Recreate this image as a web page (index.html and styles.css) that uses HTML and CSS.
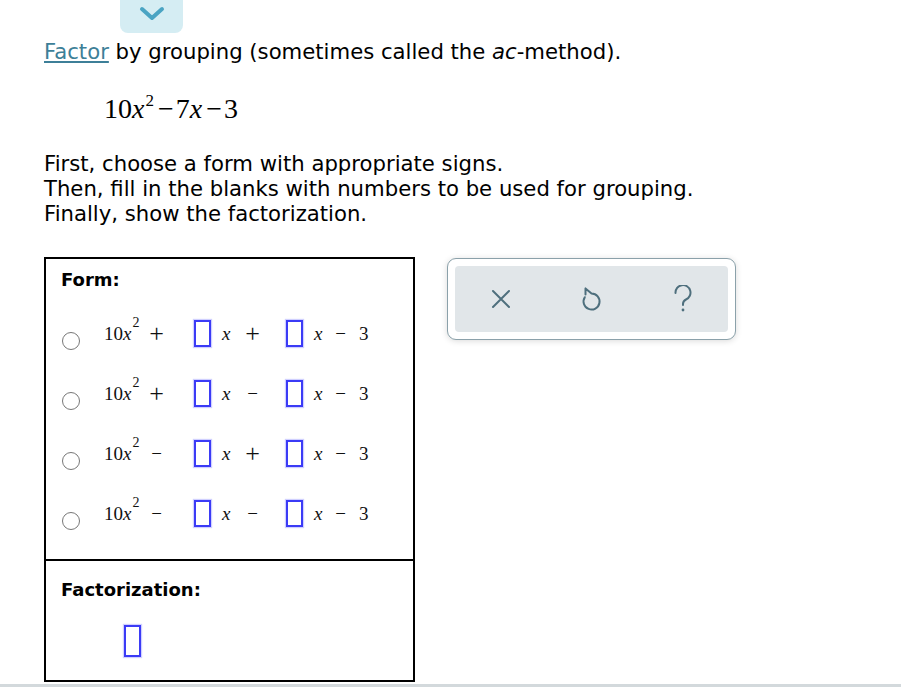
FILE: index.html
```html
<!DOCTYPE html>
<html lang="en">
<head>
    <meta charset="UTF-8">
    <title>Factor by grouping</title>
    <link rel="stylesheet" href="styles.css">
</head>
<body>

    <!-- Pestaña para plegar -->
    <div class="tab">
        <svg width="26" height="16" viewBox="0 0 26 16"><polyline points="3,3 13,12 23,3" fill="none" stroke="#4aa4c3" stroke-width="4" stroke-linecap="round" stroke-linejoin="round"/></svg>
    </div>

    <div class="content">
        <p class="prompt"><a class="term" href="#">Factor</a> by grouping (sometimes called the <i>ac</i>-method).</p>

        <div class="math-main">10<i>x</i><sup>2</sup><span class="op">−</span>7<i>x</i><span class="op">−</span>3</div>

        <p class="steps">
            First, choose a form with appropriate signs.<br>
            Then, fill in the blanks with numbers to be used for grouping.<br>
            Finally, show the factorization.
        </p>

        <div class="work">
            <div class="answer-box">
                <div class="form-part">
                    <div class="label">Form:</div>

                    <div class="option">
                        <span class="radio"></span>
                        <span class="expr">
                            <span class="lead">10<i>x</i><sup>2</sup></span>
                            <span class="sign plus">+</span>
                            <span class="blank first"></span>
                            <i class="var">x</i>
                            <span class="sign mid plus">+</span>
                            <span class="blank second"></span>
                            <i class="var">x</i>
                            <span class="sign last">−</span>
                            <span class="const">3</span>
                        </span>
                    </div>

                    <div class="option">
                        <span class="radio"></span>
                        <span class="expr">
                            <span class="lead">10<i>x</i><sup>2</sup></span>
                            <span class="sign plus">+</span>
                            <span class="blank first"></span>
                            <i class="var">x</i>
                            <span class="sign mid">−</span>
                            <span class="blank second"></span>
                            <i class="var">x</i>
                            <span class="sign last">−</span>
                            <span class="const">3</span>
                        </span>
                    </div>

                    <div class="option">
                        <span class="radio"></span>
                        <span class="expr">
                            <span class="lead">10<i>x</i><sup>2</sup></span>
                            <span class="sign">−</span>
                            <span class="blank first"></span>
                            <i class="var">x</i>
                            <span class="sign mid plus">+</span>
                            <span class="blank second"></span>
                            <i class="var">x</i>
                            <span class="sign last">−</span>
                            <span class="const">3</span>
                        </span>
                    </div>

                    <div class="option">
                        <span class="radio"></span>
                        <span class="expr">
                            <span class="lead">10<i>x</i><sup>2</sup></span>
                            <span class="sign">−</span>
                            <span class="blank first"></span>
                            <i class="var">x</i>
                            <span class="sign mid">−</span>
                            <span class="blank second"></span>
                            <i class="var">x</i>
                            <span class="sign last">−</span>
                            <span class="const">3</span>
                        </span>
                    </div>
                </div>

                <div class="fact-part">
                    <div class="label">Factorization:</div>
                    <span class="blank tall"></span>
                </div>
            </div>

            <!-- Botones de herramientas -->
            <div class="tools">
                <div class="tools-inner">
                    <button class="tool" title="Clear">
                        <svg width="20" height="20" viewBox="0 0 20 20"><path d="M2 2 L18 18 M18 2 L2 18" stroke="#4e6f7d" stroke-width="2" stroke-linecap="round"/></svg>
                    </button>
                    <button class="tool" title="Undo">
                        <svg width="22" height="26" viewBox="0 0 22 26"><path d="M10.5 7.5 A8 8 0 1 1 3.8 11.2 M4.5 2.5 L10.5 7.5 M4.5 2.5 L4.5 8.5" fill="none" stroke="#4e6f7d" stroke-width="2" stroke-linecap="round" stroke-linejoin="round"/></svg>
                    </button>
                    <button class="tool" title="Help">
                        <svg width="22" height="28" viewBox="0 0 22 28"><path d="M3.5 8 A7.5 7.5 0 1 1 14 14.5 Q11 16 11 19 V20" fill="none" stroke="#4e6f7d" stroke-width="2" stroke-linecap="round"/><circle cx="11" cy="25" r="1.4" fill="#4e6f7d"/></svg>
                    </button>
                </div>
            </div>
        </div>
    </div>

    <div class="bottom-bar"></div>

</body>
</html>
```

FILE: styles.css
```css
body {
    margin: 0;
    font-family: "DejaVu Sans", Verdana, sans-serif;
    color: #000;
    background: #fff;
}

/* Pestaña superior */
.tab {
    margin-left: 120px;
    width: 63px;
    height: 33px;
    background-color: #d5edf3;
    border-radius: 0 0 8px 8px;
    display: flex;
    justify-content: center;
    padding-top: 6px;
    box-sizing: border-box;
}

.content {
    padding-left: 44px;
}

.prompt {
    margin: 6px 0 0;
    font-size: 21.2px;
    line-height: 25px;
}

.term {
    color: #3d7f98;
    text-decoration: underline;
}

.math-main {
    margin-top: 27px;
    padding-left: 60px;
    font-family: "Liberation Serif", "Times New Roman", serif;
    font-size: 28px;
    line-height: 36px;
}

.math-main sup {
    font-size: 17px;
    line-height: 0;
    vertical-align: 12px;
    margin-left: 1px;
}

.math-main .op {
    margin: 0 2px 0 4px;
}

.steps {
    margin: 24px 0 0;
    font-size: 21.2px;
    line-height: 25px;
}

.work {
    margin-top: 31px;
    display: flex;
    align-items: flex-start;
    gap: 32px;
}

/* Caja de respuesta */
.answer-box {
    width: 371px;
    box-sizing: border-box;
    border: 2px solid #000;
}

.label {
    font-size: 18px;
    font-weight: bold;
    line-height: 22px;
    padding-left: 15px;
}

.form-part {
    padding: 10px 0 16px;
}

.form-part .label {
    margin-bottom: 12px;
}

.option {
    height: 60px;
    display: flex;
    align-items: center;
    padding-left: 16px;
}

.radio {
    width: 18px;
    height: 18px;
    box-sizing: border-box;
    border: 1.5px solid #777;
    border-radius: 50%;
    margin-top: 15px;
    flex-shrink: 0;
}

.expr {
    display: flex;
    align-items: center;
    margin-left: 24px;
    font-family: "Liberation Serif", "Times New Roman", serif;
    font-size: 19px;
    line-height: 27px;
    color: #111;
}

.expr .lead {
    width: 45px;
}

.expr sup {
    font-size: 14px;
    line-height: 0;
    vertical-align: 13px;
    margin-left: 1px;
}

.expr .sign {
    width: 15px;
    text-align center;
    text-align: center;
}

.expr .sign.plus {
    font-size: 26px;
}

.expr .sign.mid {
    margin-left: 15px;
}

.expr .sign.last {
    width: 13px;
    margin-left: 12px;
}

.expr .var {
    width: 8px;
    margin-left: 11px;
}

.expr .const {
    margin-left: 12px;
}

.blank {
    display: inline-block;
    width: 17px;
    height: 27px;
    box-sizing: border-box;
    border: 2px solid #3b3bf6;
    box-shadow: 0 0 1px 1px rgba(120, 120, 255, 0.35);
}

.blank.first {
    margin-left: 30px;
}

.blank.second {
    margin-left: 26px;
}

.fact-part {
    border-top: 2px solid #000;
    padding: 18px 0 23px;
}

.blank.tall {
    height: 32px;
    margin: 24px 0 0 78px;
    display: block;
}

/* Panel de herramientas */
.tools {
    margin-top: 1px;
    width: 289px;
    height: 82px;
    box-sizing: border-box;
    border: 1px solid #8ba1aa;
    border-radius: 9px;
    padding: 7px;
    background: #fff;
    box-shadow: 0 1px 6px rgba(0, 0, 0, 0.15);
}

.tools-inner {
    height: 100%;
    display: flex;
    background-color: #e1e6e9;
    border-radius: 4px;
}

.tool {
    flex: 1;
    border: none;
    background: none;
    padding: 0;
    display: flex;
    align-items: center;
    justify-content: center;
    cursor: pointer;
}

.bottom-bar {
    margin-top: 2px;
    height: 10px;
    background-color: #d3d9dc;
}
```
